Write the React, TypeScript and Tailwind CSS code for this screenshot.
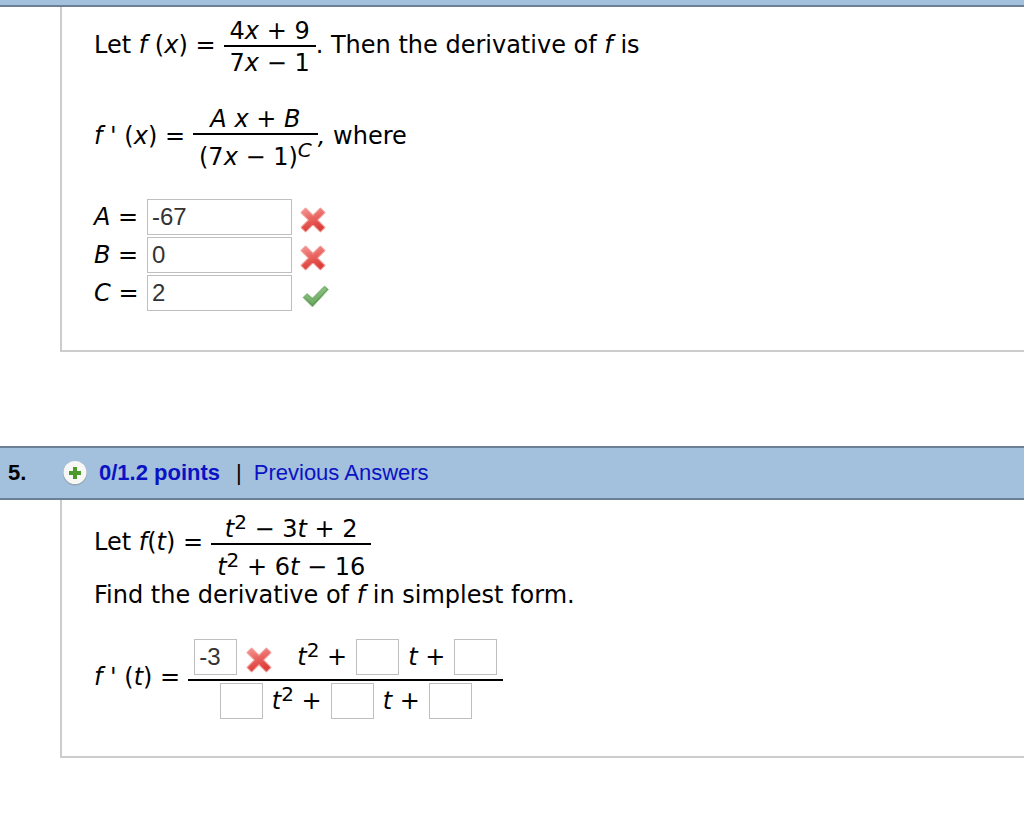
import type { ReactNode } from 'react';

type FractionProps = {
  top: ReactNode;
  bottom: ReactNode;
};

function Fraction({ top, bottom }: FractionProps) {
  return (
    <span className="inline-flex flex-col items-stretch">
      <span className="flex items-center justify-center border-b-2 border-black px-1.5">{top}</span>
      <span className="flex items-center justify-center px-1.5 pt-0.5">{bottom}</span>
    </span>
  );
}

function Power({ children }: { children: ReactNode }) {
  return <sup className="-top-2 text-[20px]">{children}</sup>;
}

function Squared() {
  return (
    <span>
      <i>t</i>
      <Power>2</Power>
    </span>
  );
}

function WrongMark() {
  return (
    <svg role="img" aria-label="Incorrect" viewBox="0 0 26 26" className="size-[26px] shrink-0">
      <defs>
        <linearGradient id="wrong" x1="0" y1="0" x2="0.3" y2="1">
          <stop offset="0" stopColor="#f2918d" />
          <stop offset="0.5" stopColor="#e96561" />
          <stop offset="1" stopColor="#dd3f3b" />
        </linearGradient>
      </defs>
      <path
        d="M5.6 1.800 13 9.200l7.400-7.400 3.800 3.800L16.800 13l7.400 7.400-3.800 3.800L13 16.800l-7.400 7.400-3.800-3.800L9.200 13 1.800 5.600z"
        fill="url(#wrong)"
        stroke="#f3a5a1"
        strokeWidth="2.4"
        strokeLinejoin="round"
      />
      <path
        d="M5.600 2.600 13 10l7.400-7.400 3 3L16 13l7.400 7.400-3 3L13 16l-7.400 7.400-3-3L10 13 2.600 5.600z"
        fill="url(#wrong)"
        stroke="url(#wrong)"
        strokeWidth="1.4"
        strokeLinejoin="round"
      />
    </svg>
  );
}

function RightMark() {
  return (
    <svg role="img" aria-label="Correct" viewBox="0 0 30 24" className="h-6 w-[30px] shrink-0">
      <defs>
        <linearGradient id="right" x1="0" y1="0" x2="0.3" y2="1">
          <stop offset="0" stopColor="#94c889" />
          <stop offset="1" stopColor="#6dab62" />
        </linearGradient>
      </defs>
      <path
        d="M3 13.500 7 9.500l5.500 4.500L24.500 2l4 3.500L12.500 23z"
        fill="#5a9652"
        stroke="#a3c99c"
        strokeLinejoin="round"
      />
      <path d="M4 13 7 10.200l5.500 4.800L24.500 3l2.500 2.500L12.500 20.500z" fill="url(#right)" />
    </svg>
  );
}

function PlusBadge() {
  return (
    <svg viewBox="0 0 26 26" className="size-[26px]" aria-hidden="true">
      <circle cx="13" cy="13.500" r="12" fill="#93a6b8" />
      <circle cx="13" cy="12.500" r="11.500" fill="#f7f7f6" />
      <path d="M11 7h4v4h4v4h-4v4h-4v-4H7v-4h4z" fill="#4a9a2c" />
    </svg>
  );
}

const boxClass = 'h-9 border border-[#bfbfbf] bg-white px-1 font-[Liberation_Sans,sans-serif] text-[24px] text-[#333]';

function Blank({ label, value = '' }: { label: string; value?: string }) {
  return <input aria-label={label} defaultValue={value} className={`${boxClass} w-[43px]`} />;
}

const answers = [
  { name: 'A', value: '-67', correct: false },
  { name: 'B', value: '0', correct: false },
  { name: 'C', value: '2', correct: true },
];

export default function App() {
  return (
    <main className="overflow-x-hidden bg-white font-['DejaVu_Sans',Verdana,sans-serif] text-[24px] leading-7 text-black">
      <div className="h-[7px] border-b-2 border-[#6c8095] bg-[#a3c0dd]" />

      <section className="ml-[60px] border-b-2 border-l-2 border-[#cccccc] pt-2.5 pb-[39px] pl-8">
        <div className="flex items-center">
          <span className="pr-2 pb-1">
            Let <i>f</i> (<i>x</i>) =
          </span>
          <Fraction top={<span>4<i>x</i> + 9</span>} bottom={<span>7<i>x</i> − 1</span>} />
          <span className="pb-1">
            . Then the derivative of <i>f</i> is
          </span>
        </div>

        <div className="mt-7 flex items-center">
          <span className="pr-2 pb-1">
            <i>f '</i> (<i>x</i>) =
          </span>
          <Fraction
            top={<span><i>A</i> <i>x</i> + <i>B</i></span>}
            bottom={
              <span className="pt-1.5">
                (7<i>x</i> − 1)<Power><i>C</i></Power>
              </span>
            }
          />
          <span className="pb-1"><i>,</i> where</span>
        </div>

        <div className="mt-7 flex flex-col gap-0.5">
          {answers.map((answer) => (
            <div key={answer.name} className="flex items-center">
              <label htmlFor={answer.name} className="w-[53px]">
                <i>{answer.name}</i> =
              </label>
              <input id={answer.name} defaultValue={answer.value} className={`${boxClass} w-[145px]`} />
              <span className="pt-1.5 pl-2">{answer.correct ? <RightMark /> : <WrongMark />}</span>
            </div>
          ))}
        </div>
      </section>

      <header className="mt-[94px] flex h-[54px] items-center border-y-2 border-[#6c8095] bg-[#a3c0dd] font-[Liberation_Sans,sans-serif] text-[22px]">
        <h2 className="w-[62px] pl-2 font-bold">5.</h2>
        <a href="#points" className="flex items-center gap-[11px] font-bold text-[#0a12c4]">
          <PlusBadge />
          0/1.2 points
        </a>
        <span className="pr-3 pl-4">|</span>
        <a href="#previous" className="text-[#0a12c4]">Previous Answers</a>
      </header>

      <section className="ml-[60px] border-b-2 border-l-2 border-[#cccccc] pt-[7px] pb-[37px] pl-8">
        <div className="flex items-center">
          <span className="pr-2 pb-1">
            Let <i>f</i>(<i>t</i>) =
          </span>
          <Fraction
            top={<span className="pt-2"><Squared /> − 3<i>t</i> + 2</span>}
            bottom={<span className="pt-1.5"><Squared /> + 6<i>t</i> − 16</span>}
          />
        </div>
        <p>
          Find the derivative of <i>f</i> in simplest form.
        </p>

        <div className="mt-[30px] flex items-center">
          <span className="pr-2 pb-1">
            <i>f '</i> (<i>t</i>) =
          </span>
          <Fraction
            top={
              <span className="flex items-center gap-[9px] pb-1">
                <Blank label="Numerator coefficient of t squared" value="-3" />
                <span className="pt-1.5"><WrongMark /></span>
                <span className="pl-4"><Squared /> +</span>
                <Blank label="Numerator coefficient of t" />
                <span><i>t</i> +</span>
                <Blank label="Numerator constant" />
              </span>
            }
            bottom={
              <span className="flex items-center gap-[9px]">
                <Blank label="Denominator coefficient of t squared" />
                <span><Squared /> +</span>
                <Blank label="Denominator coefficient of t" />
                <span><i>t</i> +</span>
                <Blank label="Denominator constant" />
              </span>
            }
          />
        </div>
      </section>
    </main>
  );
}
